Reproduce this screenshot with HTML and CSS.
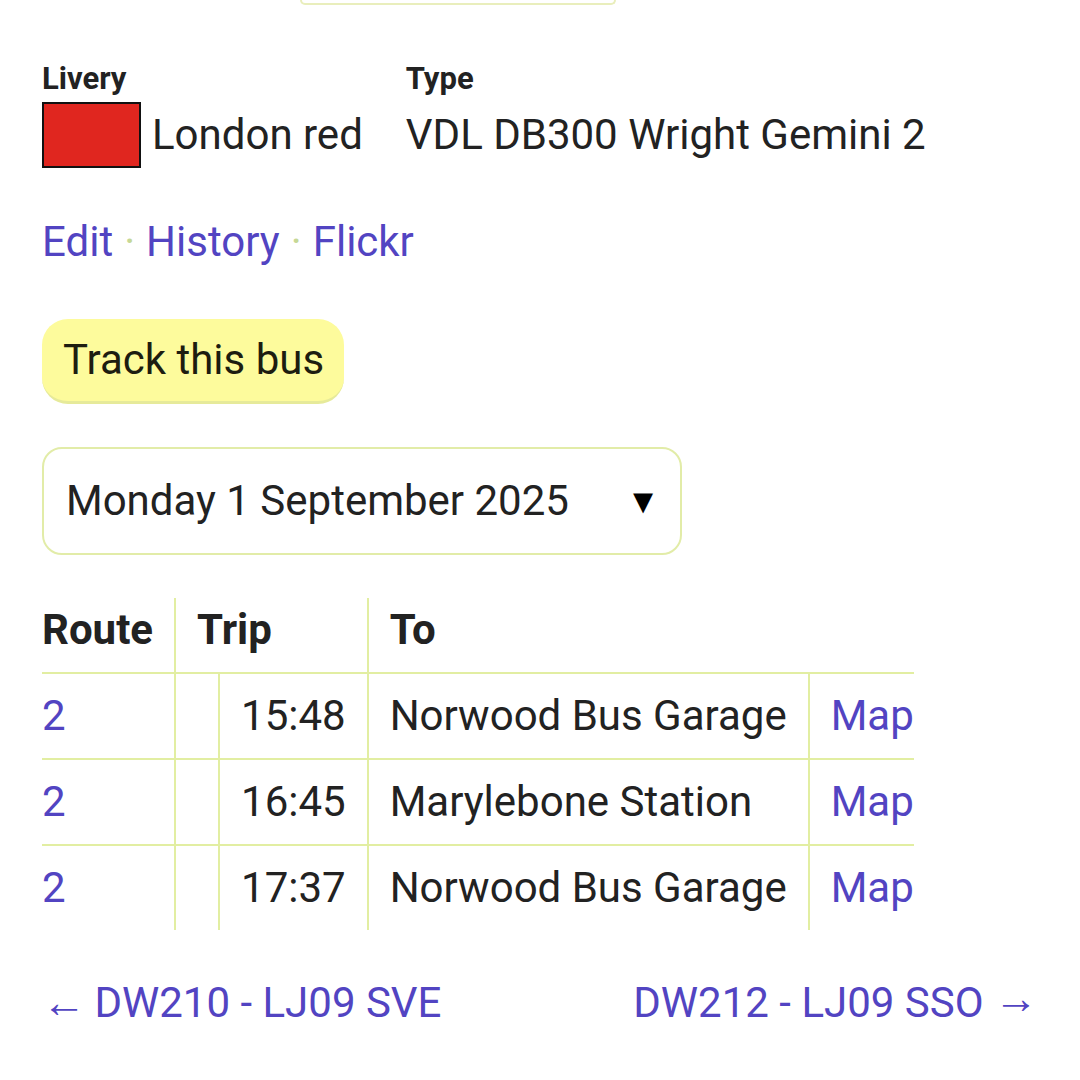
FILE: index.html
```html
<!DOCTYPE html>
<html lang="en">
<head>
    <meta charset="utf-8">
    <title>DW211 - LJ09 SSV</title>
    <link rel="stylesheet" href="styles.css">
</head>
<body>
    <div class="search-edge"></div>

    <dl class="details">
        <div class="detail">
            <dt>Livery</dt>
            <dd><span class="livery" style="background: #e0261f"></span>London red</dd>
        </div>
        <div class="detail">
            <dt>Type</dt>
            <dd>VDL DB300 Wright Gemini 2</dd>
        </div>
    </dl>

    <p class="links">
        <a href="#">Edit</a><span class="sep">·</span><a href="#">History</a><span class="sep">·</span><a href="#">Flickr</a>
    </p>

    <button class="track">Track this bus</button>

    <div class="date-select">
        <span>Monday 1 September 2025</span>
        <span class="arrow">▼</span>
    </div>

    <table class="trips">
        <thead>
            <tr>
                <th class="route">Route</th>
                <th colspan="2">Trip</th>
                <th colspan="2">To</th>
            </tr>
        </thead>
        <tbody>
            <tr>
                <td class="route"><a href="#">2</a></td>
                <td class="trip-id"></td>
                <td class="time">15:48</td>
                <td>Norwood Bus Garage</td>
                <td class="map"><a href="#">Map</a></td>
            </tr>
            <tr>
                <td class="route"><a href="#">2</a></td>
                <td class="trip-id"></td>
                <td class="time">16:45</td>
                <td>Marylebone Station</td>
                <td class="map"><a href="#">Map</a></td>
            </tr>
            <tr>
                <td class="route"><a href="#">2</a></td>
                <td class="trip-id"></td>
                <td class="time">17:37</td>
                <td>Norwood Bus Garage</td>
                <td class="map"><a href="#">Map</a></td>
            </tr>
        </tbody>
    </table>

    <nav class="prev-next">
        <a href="#"><span class="arr-left">←</span> DW210 - LJ09 SVE</a>
        <a href="#">DW212 - LJ09 SSO <span class="arr-right">→</span></a>
    </nav>
</body>
</html>
```

FILE: styles.css
```css
body {
    margin: 0;
    padding: 0 42px;
    font-family: Roboto, "Liberation Sans", sans-serif;
    font-size: 42px;
    line-height: 50px;
    color: #222;
    background: #fff;
}

a {
    color: #5244c2;
    text-decoration: none;
}

/* bottom edge of the search box above */
.search-edge {
    margin-left: 258px;
    width: 312px;
    height: 3px;
    border: 2px solid #e9eebc;
    border-top: 0;
    border-radius: 0 0 8px 8px;
}

.details {
    display: flex;
    gap: 43px;
    margin: 55px 0 0;
}

.detail dt {
    font-size: 31px;
    font-weight: bold;
    line-height: 37px;
}

.detail dd {
    margin: 0;
    display: flex;
    align-items: center;
    gap: 11px;
    height: 76px;
}

.livery {
    display: inline-block;
    width: 95px;
    height: 62px;
    border: 2px solid #111;
}

.links {
    margin: 44px 0 0;
}

.sep {
    color: #c6d896;
    padding: 0 11px;
}

.track {
    display: block;
    margin-top: 52px;
    font: inherit;
    color: #1d1d10;
    background: #fdfb9c;
    border: 0;
    border-bottom: 3px solid #e6ea9a;
    border-radius: 26px;
    padding: 16px 20px 16px 21px;
}

.date-select {
    display: flex;
    justify-content: space-between;
    align-items: center;
    width: 640px;
    height: 108px;
    box-sizing: border-box;
    margin-top: 43px;
    padding: 0 20px 0 22px;
    border: 2px solid #e2eca8;
    border-radius: 20px;
}

.arrow {
    font-size: 34px;
    color: #000;
}

.trips {
    margin-top: 43px;
    border-collapse: collapse;
}

.trips th,
.trips td {
    text-align: left;
    padding: 17px 21px;
    border-left: 2px solid #e2eea2;
    white-space: nowrap;
}

.trips th {
    padding: 7px 21px 17px;
}

.trips .route {
    border-left: 0;
    padding-left: 0;
}

.trips tbody tr {
    border-top: 2px solid #e2eea2;
}

.trips .trip-id {
    width: 0;
    padding: 0 21px;
}

.trips .time {
    text-align: right;
}

.trips .map {
    padding-right: 0;
}

.prev-next {
    display: flex;
    justify-content: space-between;
    margin-top: 48px;
}

.arr-left,
.arr-right {
    font-size: 44px;
    line-height: 0;
}

.arr-left {
    margin-right: -2px;
}

.arr-right {
    vertical-align: 4px;
}
```
